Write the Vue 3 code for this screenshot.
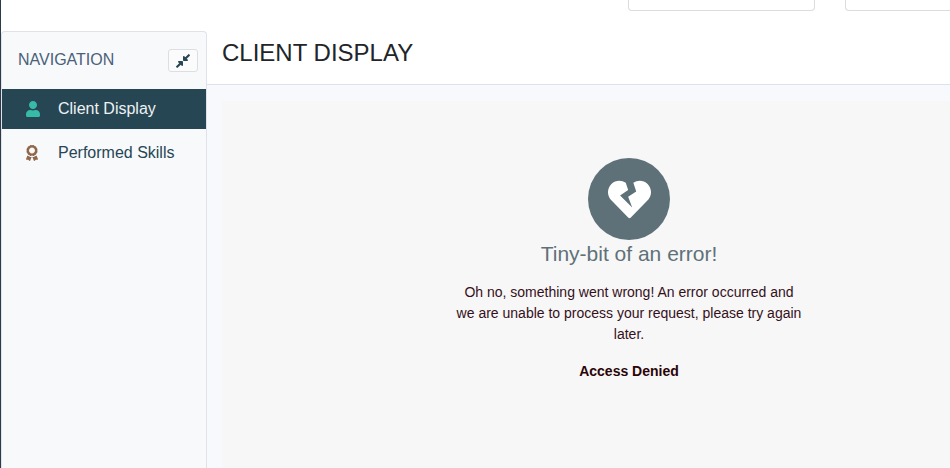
<script setup>
const navItems = [
  { label: 'Client Display', icon: 'user', active: true },
  { label: 'Performed Skills', icon: 'award', active: false },
];
const icons = {
  user: { box: '0 0 448 512', d: 'M224 256c70.7 0 128-57.3 128-128S294.7 0 224 0 96 57.3 96 128s57.3 128 128 128zm89.6 32h-16.7c-22.2 10.2-46.9 16-72.9 16s-50.6-5.8-72.9-16h-16.7C60.2 288 0 348.2 0 422.4V464c0 26.5 21.5 48 48 48h352c26.5 0 48-21.5 48-48v-41.6c0-74.2-60.2-134.4-134.4-134.4z' },
  award: { box: '0 0 384 512', d: 'M97.12 362.63c-8.69-8.69-4.16-6.24-25.12-11.85-9.51-2.55-17.87-7.45-25.43-13.32L1.2 448.7c-4.39 10.77 3.81 22.47 15.43 22.03l52.69-2.01L105.56 507c8 8.44 22.04 5.81 26.43-4.96l52.05-127.62c-10.84 6.04-22.87 9.58-35.31 9.58-19.5 0-37.82-7.59-51.61-21.37zM382.8 448.7l-45.37-111.24c-7.56 5.88-15.92 10.77-25.43 13.32-21.07 5.64-16.45 3.18-25.12 11.85-13.79 13.78-32.12 21.37-51.62 21.37-12.44 0-24.47-3.55-35.31-9.58L252 502.04c4.39 10.77 18.44 13.4 26.43 4.96l36.25-38.28 52.69 2.01c11.62.44 19.82-11.27 15.43-22.03zM263 340c15.28-15.55 17.03-14.21 38.79-20.14 13.89-3.79 24.75-14.84 28.47-28.98 7.48-28.4 5.54-24.97 25.95-45.75 10.17-10.35 14.14-25.44 10.42-39.58-7.47-28.38-7.48-24.42 0-52.83 3.72-14.14-.25-29.23-10.42-39.58-20.41-20.78-18.47-17.36-25.95-45.75-3.72-14.14-14.58-25.19-28.47-28.98-27.88-7.61-24.52-5.62-44.95-26.41-10.17-10.35-25-14.4-38.89-10.61-27.87 7.6-23.98 7.61-51.9 0-13.89-3.79-28.72.25-38.89 10.61-20.41 20.78-17.05 18.8-44.94 26.41-13.89 3.79-24.75 14.84-28.47 28.98-7.47 28.39-5.54 24.97-25.95 45.75-10.17 10.35-14.15 25.44-10.42 39.58 7.47 28.36 7.48 24.4 0 52.82-3.72 14.14.25 29.23 10.42 39.59 20.41 20.78 18.47 17.35 25.95 45.75 3.72 14.14 14.58 25.19 28.47 28.98C104.6 325.96 106.27 325 121 340c13.23 13.47 33.84 15.88 49.74 5.82a39.676 39.676 0 0 1 42.53 0c15.89 10.06 36.5 7.65 49.73-5.82zM97.66 175.96c0-53.03 42.24-96.02 94.34-96.02s94.34 42.99 94.34 96.02-42.24 96.02-94.34 96.02-94.34-42.99-94.34-96.02z' },
};
</script>

<template>
  <div class="page">
    <div class="topbar">
      <div class="top-box first"></div>
      <div class="top-box second"></div>
    </div>
    <div class="body">
      <aside class="sidebar">
        <div class="side-head">
          <span class="side-title">NAVIGATION</span>
          <button class="collapse" type="button" aria-label="Collapse">
            <svg viewBox="0 0 448 512" width="14" height="16">
              <path fill="#2a4553" d="M4.686 427.314L104 328l-32.922-31.029C55.958 281.851 66.666 256 88.048 256h112C213.303 256 224 266.745 224 280v112c0 21.382-25.803 32.09-40.922 16.971L152 376l-99.314 99.314c-6.248 6.248-16.379 6.248-22.627 0L4.686 449.941c-6.248-6.248-6.248-16.379 0-22.627zM443.314 84.686L344 184l32.922 31.029c15.12 15.12 4.412 40.971-16.97 40.971h-112C234.697 256 224 245.255 224 232V120c0-21.382 25.803-32.09 40.922-16.971L296 136l99.314-99.314c6.248-6.248 16.379-6.248 22.627 0l25.373 25.373c6.248 6.248 6.248 16.379 0 22.627z" />
            </svg>
          </button>
        </div>
        <nav class="nav">
          <a v-for="item in navItems" :key="item.label" class="nav-item" :class="{ active: item.active }">
            <span class="nav-icon">
              <svg :class="item.icon" :viewBox="icons[item.icon].box" height="16">
                <path fill="currentColor" :d="icons[item.icon].d" />
              </svg>
            </span>
            {{ item.label }}
          </a>
        </nav>
      </aside>
      <main class="main">
        <header class="main-head">
          <h1>CLIENT DISPLAY</h1>
        </header>
        <div class="content">
          <section class="panel">
            <div class="error-circle">
              <svg viewBox="0 0 512 512" width="43" height="43">
                <path fill="#fff" d="M473.7 73.8l-2.4-2.5c-46-47-118-51.7-169.6-14.8L336 159.9l-96 64 48 128-144-144 96-64-28.6-86.5C159.7 19.6 87 24 40.7 71.4l-2.4 2.4C-10.4 123.6-12.5 202.9 31 256l212.1 218.6c7.1 7.3 18.6 7.3 25.7 0L481 255.9c43.5-53 41.4-132.3-7.3-182.1z" />
              </svg>
            </div>
            <h2>Tiny-bit of an error!</h2>
            <p class="message">Oh no, something went wrong! An error occurred and we are unable to process your request, please try again later.</p>
            <p class="reason">Access Denied</p>
          </section>
        </div>
      </main>
    </div>
  </div>
</template>

<style>
html,
body {
  margin: 0;
  height: 100%;
  overflow: hidden;
  background: #fff;
}
</style>

<style scoped>
.page {
  height: 468px;
  display: flex;
  flex-direction: column;
  border-left: 1px solid #2c3a4b;
  box-sizing: border-box;
  font-family: "Liberation Sans", Arial, sans-serif;
  overflow: hidden;
}

.topbar {
  height: 31px;
  flex: none;
  display: flex;
  justify-content: flex-end;
  gap: 30px;
}

.top-box {
  height: 10px;
  background: #fff;
  border: 1px solid #dcdcdc;
  border-top: 0;
  border-radius: 0 0 4px 4px;
}

.top-box.first {
  width: 185px;
}

.top-box.second {
  width: 104px;
  border-right: 0;
  border-radius: 0 0 0 4px;
}

.body {
  flex: 1;
  display: flex;
  min-height: 0;
}

.sidebar {
  width: 206px;
  flex: none;
  box-sizing: border-box;
  background: #f8f9fb;
  border: 1px solid #dfe2e8;
  border-bottom: 0;
  border-radius: 4px 4px 0 0;
}

.side-head {
  height: 57px;
  display: flex;
  align-items: center;
  justify-content: space-between;
  padding: 0 8px 0 16px;
}

.side-title {
  font-size: 16px;
  line-height: 20px;
  margin-bottom: 2px;
  color: #4a6078;
}

.collapse {
  width: 30px;
  height: 23px;
  padding: 0;
  display: flex;
  align-items: center;
  justify-content: center;
  background: #fbfbfc;
  border: 1px solid #dcdee2;
  border-radius: 3px;
}

.nav-item {
  height: 44px;
  display: flex;
  align-items: center;
  font-size: 16px;
  color: #264653;
}

.nav-item.active {
  height: 40px;
  margin-bottom: 2px;
  background: #264653;
  color: #eef2f4;
}

.nav-icon {
  width: 56px;
  padding-left: 16px;
  box-sizing: border-box;
  display: flex;
  justify-content: center;
  padding-right: 10px;
  flex: none;
}

.nav-icon .user {
  color: #38baa9;
}

.nav-icon .award {
  color: #91674a;
  margin-left: -2px;
}

.main {
  flex: 1;
  min-width: 0;
  display: flex;
  flex-direction: column;
}

.main-head {
  height: 54px;
  flex: none;
  box-sizing: border-box;
  background: #fff;
  border-bottom: 1px solid #dfe2ec;
  padding-left: 15px;
}

h1 {
  margin: 0;
  font-size: 24px;
  font-weight: 400;
  line-height: 44px;
  color: #212529;
}

.content {
  flex: 1;
  min-height: 0;
  display: flex;
  background: #f8f9fd;
  padding: 16px 0 0 15px;
  overflow: hidden;
}

/* the panel runs past the right edge of the window */
.panel {
  width: 814px;
  flex: none;
  background: #f7f7f7;
  display: flex;
  flex-direction: column;
  align-items: center;
  padding-top: 57px;
  box-sizing: border-box;
}

.error-circle {
  width: 82px;
  height: 82px;
  flex: none;
  border-radius: 50%;
  background: #5f7178;
  display: flex;
  align-items: center;
  justify-content: center;
}

h2 {
  margin: 1px 0 0;
  font-size: 21px;
  font-weight: 400;
  line-height: 25px;
  color: #5f7178;
}

.message {
  width: 350px;
  margin: 16px 0 0;
  font-size: 14px;
  line-height: 21px;
  text-align: center;
  color: #35101a;
}

.reason {
  margin: 16px 0 0;
  font-size: 14px;
  line-height: 21px;
  font-weight: 700;
  color: #2b0408;
}
</style>
